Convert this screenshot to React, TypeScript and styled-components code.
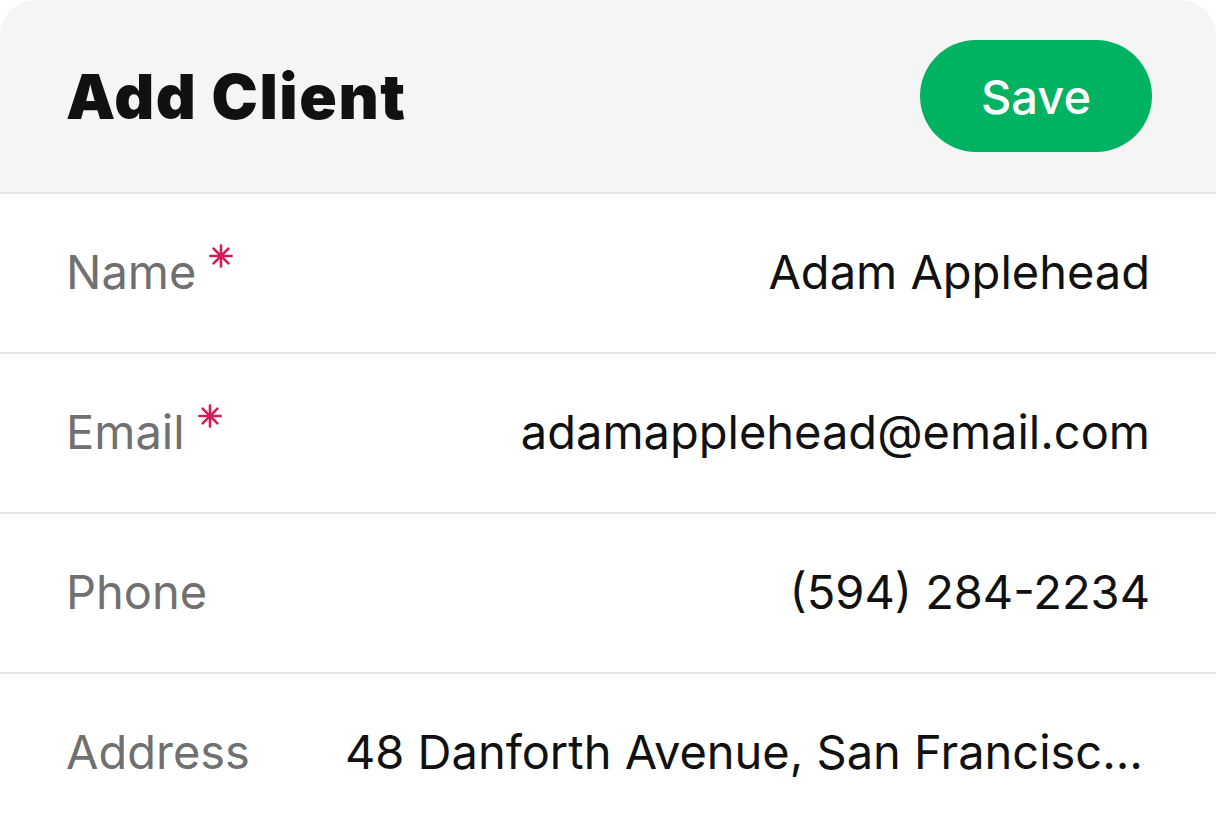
import React from 'react';
import styled, { createGlobalStyle } from 'styled-components';

const GlobalStyle = createGlobalStyle`
  html, body {
    margin: 0;
    padding: 0;
    background: #ffffff;
  }
  body {
    font-family: Inter, "Noto Sans", sans-serif;
    -webkit-font-smoothing: antialiased;
  }
`;

const Sheet = styled.div`
  width: 1216px;
  height: 832px;
  overflow: hidden;
  background: #ffffff;
  border-radius: 36px 36px 0 0;
`;

const Header = styled.header`
  display: flex;
  align-items: center;
  justify-content: space-between;
  height: 192px;
  padding: 0 64px 0 66px;
  background: #f5f5f5;
  border-bottom: 2px solid #e6e6e6;
`;

const Title = styled.h1`
  margin: 0;
  font-family: Inter, sans-serif;
  font-size: 62px;
  font-weight: 900;
  letter-spacing: 1.6px;
  color: #111111;
`;

const SaveButton = styled.button`
  width: 232px;
  height: 112px;
  padding: 0;
  border: none;
  border-radius: 56px;
  background: #00b261;
  color: #ffffff;
  font-family: Inter, sans-serif;
  font-size: 47px;
  font-weight: 500;
  cursor: pointer;
`;

const Row = styled.div`
  display: flex;
  align-items: center;
  gap: 95px;
  box-sizing: border-box;
  height: 160px;
  padding: 0 66px 4px;
  border-bottom: 2px solid #e6e6e6;
`;

const Label = styled.span`
  flex-shrink: 0;
  position: relative;
  font-size: 47px;
  color: #707070;
`;

const Required = styled.svg`
  position: absolute;
  top: 1px;
  left: 100%;
  margin-left: 13px;
  width: 24px;
  height: 24px;
`;

const Value = styled.span`
  flex: 1;
  min-width: 0;
  text-align: right;
  font-size: 47px;
  color: #111111;
  white-space: nowrap;
  overflow: hidden;
  text-overflow: ellipsis;
`;

const Asterisk = () => (
  <Required viewBox="0 0 24 24" aria-label="required">
    <g stroke="#d41a58" strokeWidth="2.6" strokeLinecap="round">
      <line x1="12" y1="1.5" x2="12" y2="22.5" />
      <line x1="1.5" y1="12" x2="22.5" y2="12" />
      <line x1="4.6" y1="4.6" x2="19.4" y2="19.4" />
      <line x1="19.4" y1="4.6" x2="4.6" y2="19.4" />
    </g>
  </Required>
);

const fields = [
  { label: 'Name', value: 'Adam Applehead', required: true },
  { label: 'Email', value: 'adamapplehead@email.com', required: true },
  { label: 'Phone', value: '(594) 284-2234', required: false },
  { label: 'Address', value: '48 Danforth Avenue, San Francisco, CA 94110', required: false },
];

const App: React.FC = () => (
  <>
    <GlobalStyle />
    <Sheet>
      <Header>
        <Title>Add Client</Title>
        <SaveButton>Save</SaveButton>
      </Header>
      {fields.map(field => (
        <Row key={field.label}>
          <Label>
            {field.label}
            {field.required && <Asterisk />}
          </Label>
          <Value>{field.value}</Value>
        </Row>
      ))}
    </Sheet>
  </>
);

export default App;
